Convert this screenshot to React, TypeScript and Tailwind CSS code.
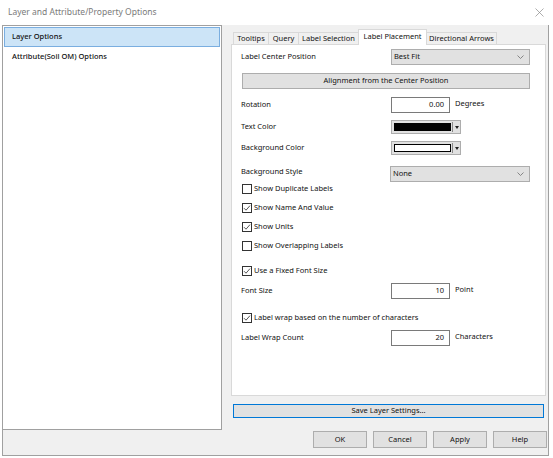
import type { ReactNode } from 'react';

const tabs = [
  { label: 'Tooltips', w: 'w-[36px]' },
  { label: 'Query', w: 'w-[31px]' },
  { label: 'Label Selection', w: 'w-[61px]' },
  { label: 'Label Placement', w: 'w-[69px]', active: true },
  { label: 'Directional Arrows', w: 'w-[71px]' },
];

function Chevron() {
  return (
    <svg width={7} height={4} viewBox="0 0 7 4" fill="none" stroke="#7a7a7a" strokeWidth="0.9">
      <path d="M0.5 0.5 L3.5 3.5 L6.5 0.5" />
    </svg>
  );
}

function Combo({ value, extra }: { value: string; extra: string }) {
  return (
    <div
      className={`flex items-center justify-between h-[16px] w-[139px] bg-[#e1e1e1] border border-[#adadad] pl-[2px] pr-[5px] ${extra}`}
    >
      <span>{value}</span>
      <Chevron />
    </div>
  );
}

function NumBox({ value, unit }: { value: string; unit: string }) {
  return (
    <div className="flex items-center">
      <div className="h-[16px] w-[59px] bg-white border border-[#7a7a7a] flex items-center justify-end pr-[5px]">
        {value}
      </div>
      <span className="ml-[5px] -mt-[2px]">{unit}</span>
    </div>
  );
}

function ColorBtn({ dark }: { dark: boolean }) {
  return (
    <div className="flex items-center h-[14px] w-[70px] bg-[#e1e1e1] border border-[#adadad] pl-[2px]">
      <div className={`h-[8px] w-[57px] border border-black ${dark ? 'bg-black' : 'bg-white'}`} />
      <div className="ml-[1px] h-[10px] w-px bg-[#8a8a8a]" />
      <svg width={4} height={3} viewBox="0 0 4 3" className="ml-[2px]">
        <path d="M0 0 L4 0 L2 3 Z" fill="#222" />
      </svg>
    </div>
  );
}

function Check({ checked, label, extra }: { checked?: boolean; label: string; extra: string }) {
  return (
    <div className={`flex items-center h-[10px] ${extra}`}>
      <div className="w-[10px] h-[10px] border border-[#333] bg-white flex items-center justify-center">
        {checked && (
          <svg width={8} height={8} viewBox="0 0 8 8" fill="none" stroke="#444" strokeWidth="0.9">
            <path d="M1 4.2 L3 6.2 L7 1.6" />
          </svg>
        )}
      </div>
      <span className="ml-[2px]">{label}</span>
    </div>
  );
}

function Row({ label, extra, children }: { label: string; extra: string; children: ReactNode }) {
  return (
    <div className={`flex items-center ${extra}`}>
      <span className="w-[150px] shrink-0">{label}</span>
      {children}
    </div>
  );
}

function Btn({ children }: { children: ReactNode }) {
  return (
    <div className="w-[54px] h-[17px] bg-[#e1e1e1] border border-[#adadad] flex items-center justify-center">
      {children}
    </div>
  );
}

export default function App() {
  return (
    <div className="w-[553px] h-[458px] bg-white flex flex-col font-['Noto_Sans',sans-serif] text-[7.5px] text-[#111] leading-none">
      <div className="h-[25px] shrink-0 flex items-center justify-between pl-[8px] pr-[9px]">
        <span className="text-[8.5px] text-[#7a7a7a]">Layer and Attribute/Property Options</span>
        <svg width={9} height={9} viewBox="0 0 9 9" stroke="#8a8a8a" strokeWidth="0.7">
          <path d="M0.5 0.5 L8.5 8.5 M8.5 0.5 L0.5 8.5" />
        </svg>
      </div>

      <div className="flex-1 ml-[2px] mr-[4px] mb-[2px] border-x border-b border-[#a0a0a0] bg-[#f0f0f0] flex flex-col">
        <div className="h-[405px] shrink-0 flex">
          <div className="w-[219px] shrink-0 bg-white border-t border-r border-b border-[#a0a0a0] px-[1px] pt-[1px] font-medium">
            <div className="h-[20px] border border-[#7aaee0] bg-[#cce4f7] flex items-center pl-[7px]">Layer Options</div>
            <div className="h-[20px] flex items-center pl-[8px]">Attribute(Soil OM) Options</div>
          </div>

          <div className="ml-[9px] w-[315px] flex flex-col pt-[4px]">
            <div className="flex items-end h-[15px] pl-[2px]">
              {tabs.map((t, i) =>
                t.active ? (
                  <div
                    key={t.label}
                    className={`${t.w} -ml-px h-[16px] -mb-px relative z-10 bg-white border border-b-0 border-[#d9d9d9] flex items-center justify-center pb-[2px]`}
                  >
                    {t.label}
                  </div>
                ) : (
                  <div
                    key={t.label}
                    className={`${t.w} ${i > 0 ? '-ml-px' : ''} h-[12px] bg-[#f0f0f0] border border-b-0 border-[#d9d9d9] flex items-center justify-center`}
                  >
                    {t.label}
                  </div>
                ),
              )}
            </div>

            <div className="h-[352px] bg-white border border-[#d9d9d9] pl-[9px] flex flex-col">
              <Row label="Label Center Position" extra="mt-[4px]">
                <Combo value="Best Fit" extra="" />
              </Row>
              <div className="mt-[8px] ml-[1px] h-[16px] w-[288px] bg-[#e1e1e1] border border-[#adadad] flex items-center justify-center">
                Alignment from the Center Position
              </div>
              <Row label="Rotation" extra="mt-[8px]">
                <NumBox value="0.00" unit="Degrees" />
              </Row>
              <Row label="Text Color" extra="mt-[7px]">
                <ColorBtn dark />
              </Row>
              <Row label="Background Color" extra="mt-[7px]">
                <ColorBtn dark={false} />
              </Row>
              <div className="flex items-start mt-[11px]">
                <span className="w-[149px] shrink-0 mt-[2px]">Background Style</span>
                <Combo value="None" extra="h-[15px] w-[140px]" />
              </div>
              <Check label="Show Duplicate Labels" extra="mt-[2px] ml-[1px]" />
              <Check checked label="Show Name And Value" extra="mt-[9px] ml-[1px]" />
              <Check checked label="Show Units" extra="mt-[9px] ml-[1px]" />
              <Check label="Show Overlapping Labels" extra="mt-[9px] ml-[1px]" />
              <Check checked label="Use a Fixed Font Size" extra="mt-[15px] ml-[1px]" />
              <Row label="Font Size" extra="mt-[7px]">
                <NumBox value="10" unit="Point" />
              </Row>
              <Check checked label="Label wrap based on the number of characters" extra="mt-[14px] ml-[1px]" />
              <Row label="Label Wrap Count" extra="mt-[7px]">
                <NumBox value="20" unit="Characters" />
              </Row>
            </div>

            <div className="mt-[8px] mx-[2px] h-[14px] bg-[#e1e1e1] border border-[#0078d7] flex items-center justify-center">
              Save Layer Settings...
            </div>
          </div>
        </div>

        <div className="flex-1 flex justify-end items-start gap-[6px] pt-[1px] pr-[1px]">
          <Btn>OK</Btn>
          <Btn>Cancel</Btn>
          <Btn>Apply</Btn>
          <Btn>Help</Btn>
        </div>
      </div>
    </div>
  );
}
